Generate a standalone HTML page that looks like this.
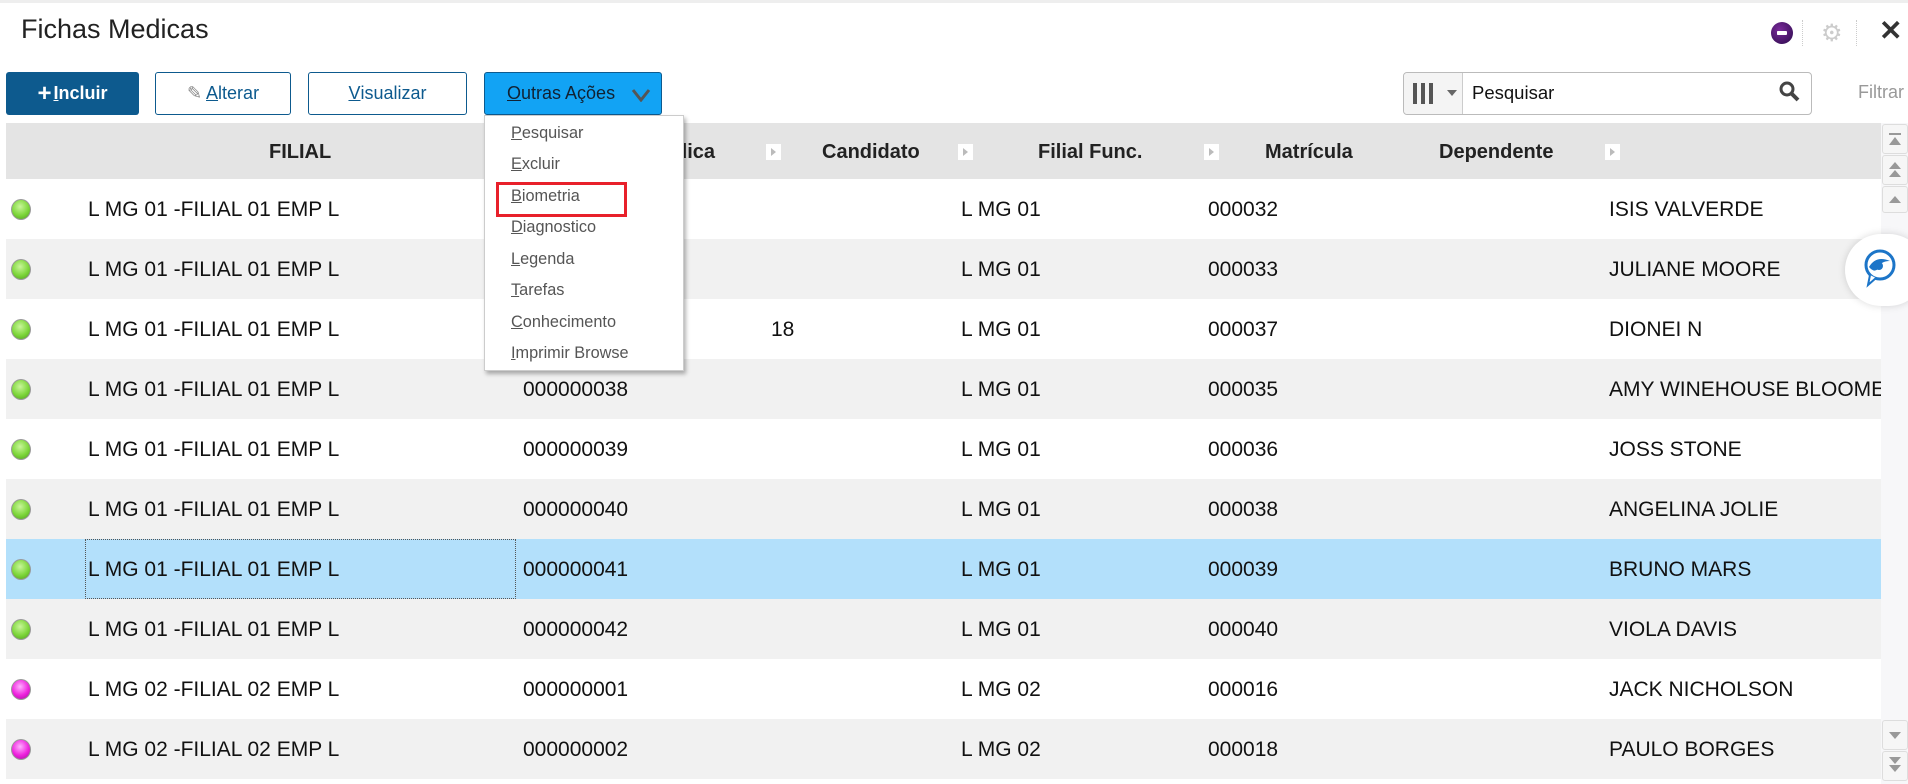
<!DOCTYPE html>
<html><head><meta charset="utf-8"><style>
*{margin:0;padding:0;box-sizing:border-box}
body{width:1908px;height:784px;background:#fff;font-family:"Liberation Sans",Arial,sans-serif;position:relative;overflow:hidden;color:#111}
.a{position:absolute}
.btn{position:absolute;top:72px;height:43px;border-radius:3px;font-size:18px;display:flex;align-items:center;justify-content:center}
.row{position:absolute;left:6px;width:1875px;height:60px;font-size:21px}
.row span{position:absolute;top:19px;white-space:nowrap}
.dot{position:absolute;left:5px;top:20px;width:20px;height:21px;border-radius:50%;border:1px solid #999}
.g{background:radial-gradient(circle at 45% 35%,#c9f59a,#7dd63a 55%,#4e9a1d)}
.m{background:radial-gradient(circle at 45% 35%,#ffb0ff,#ee22dd 55%,#a0109a)}
.hd{position:absolute;top:141px;font-size:20px;font-weight:bold;color:#222}
.ar{position:absolute;top:144px;width:15px;height:16px;background:#fff}
.ar:after{content:"";position:absolute;left:5px;top:4px;border-left:5px solid #bbb;border-top:4px solid transparent;border-bottom:4px solid transparent}
.mi{position:absolute;left:511px;font-size:16.3px;color:#555}
.mi u{text-decoration:underline}
.sb{position:absolute;left:1882px;width:26px;height:30px;background:#f6f6f6;border:1px solid #ddd;border-radius:3px}
</style></head><body>
<div class="a" style="left:0;top:0;width:1908px;height:3px;background:#eee"></div>
<div class="a" style="left:21px;top:14px;font-size:27px;color:#222">Fichas Medicas</div>
<div class="a" style="left:1771px;top:22px;width:22px;height:22px;border-radius:50%;background:radial-gradient(circle at 40% 35%,#7a2a9a,#2a0a4a)"></div>
<div class="a" style="left:1777px;top:31px;width:10px;height:4px;border:2px solid #fff;border-right:none;border-radius:1px"></div>
<div class="a" style="left:1802px;top:20px;height:26px;border-left:1px dotted #ccc"></div>
<div class="a" style="left:1821px;top:19px;font-size:24px;color:#ccc">⚙</div>
<div class="a" style="left:1856px;top:20px;height:26px;border-left:1px dotted #ccc"></div>
<div class="a" style="left:1879px;top:14px;font-size:28px;color:#333;font-weight:bold">✕</div>

<div class="btn" style="left:6px;width:133px;background:#0d5a8e;color:#fff;font-weight:bold"><span style="font-size:24px;margin-right:2px">+</span><u>I</u>ncluir</div>
<div class="btn" style="left:155px;width:136px;border:1px solid #0d5a8e;color:#0d5a8e"><span style="color:#888;margin-right:4px">✎</span><u>A</u>lterar</div>
<div class="btn" style="left:308px;width:159px;border:1px solid #0d5a8e;color:#0d5a8e"><u>V</u>isualizar</div>
<div class="btn" style="left:484px;width:178px;background:#12a3f4;border:1px solid #0d5a8e;color:#123;justify-content:flex-start;padding-left:22px"><u>O</u>utras Ações<svg style="position:absolute;right:10px;top:15px" width="20" height="14"><path d="M2 2 L10 12 L18 2" stroke="#555" stroke-width="3" fill="none"/></svg></div>

<div class="a" style="left:1403px;top:72px;width:409px;height:43px;border:1px solid #bbb;border-radius:4px"></div>
<div class="a" style="left:1404px;top:73px;width:59px;height:41px;background:#f4f4f4;border-right:1px solid #ccc;border-radius:4px 0 0 4px"></div>
<div class="a" style="left:1413px;top:83px;width:4px;height:21px;background:#555;box-shadow:8px 0 #555,16px 0 #555"></div>
<div class="a" style="left:1447px;top:90px;border-top:6px solid #666;border-left:5px solid transparent;border-right:5px solid transparent"></div>
<div class="a" style="left:1472px;top:82px;font-size:18.5px;color:#111">Pesquisar</div>
<svg class="a" style="left:1779px;top:81px" width="22" height="22"><circle cx="8" cy="8" r="6" stroke="#444" stroke-width="3" fill="none"/><path d="M12 12 L19 19" stroke="#444" stroke-width="4"/></svg>
<div class="a" style="left:1858px;top:82px;font-size:18px;color:#999">Filtrar</div>

<div class="a" style="left:6px;top:123px;width:1875px;height:56px;background:#e4e4e4"></div>
<div class="hd" style="left:269px">FILIAL</div>
<div class="hd" style="left:675px">dica</div>
<div class="ar" style="left:766px"></div>
<div class="hd" style="left:822px">Candidato</div>
<div class="ar" style="left:958px"></div>
<div class="hd" style="left:1038px">Filial Func.</div>
<div class="ar" style="left:1204px"></div>
<div class="hd" style="left:1265px">Matrícula</div>
<div class="hd" style="left:1439px">Dependente</div>
<div class="ar" style="left:1605px"></div>

<div class="row" style="top:179px;background:#fff"><div class="dot g"></div><span style="left:82px">L MG 01 -FILIAL 01 EMP L</span><span style="left:955px">L MG 01</span><span style="left:1202px">000032</span><span style="left:1603px">ISIS VALVERDE</span></div>
<div class="row" style="top:239px;background:#f1f1f1"><div class="dot g"></div><span style="left:82px">L MG 01 -FILIAL 01 EMP L</span><span style="left:955px">L MG 01</span><span style="left:1202px">000033</span><span style="left:1603px">JULIANE MOORE</span></div>
<div class="row" style="top:299px;background:#fff"><div class="dot g"></div><span style="left:82px">L MG 01 -FILIAL 01 EMP L</span><span style="left:765px">18</span><span style="left:955px">L MG 01</span><span style="left:1202px">000037</span><span style="left:1603px">DIONEI N</span></div>
<div class="row" style="top:359px;background:#f1f1f1"><div class="dot g"></div><span style="left:82px">L MG 01 -FILIAL 01 EMP L</span><span style="left:517px">000000038</span><span style="left:955px">L MG 01</span><span style="left:1202px">000035</span><span style="left:1603px">AMY WINEHOUSE BLOOMEI</span></div>
<div class="row" style="top:419px;background:#fff"><div class="dot g"></div><span style="left:82px">L MG 01 -FILIAL 01 EMP L</span><span style="left:517px">000000039</span><span style="left:955px">L MG 01</span><span style="left:1202px">000036</span><span style="left:1603px">JOSS STONE</span></div>
<div class="row" style="top:479px;background:#f1f1f1"><div class="dot g"></div><span style="left:82px">L MG 01 -FILIAL 01 EMP L</span><span style="left:517px">000000040</span><span style="left:955px">L MG 01</span><span style="left:1202px">000038</span><span style="left:1603px">ANGELINA JOLIE</span></div>
<div class="row" style="top:539px;background:#b3e0fb"><div class="dot g"></div><div class="a" style="left:79px;top:0;width:431px;height:60px;border:1px dotted #555"></div><span style="left:82px">L MG 01 -FILIAL 01 EMP L</span><span style="left:517px">000000041</span><span style="left:955px">L MG 01</span><span style="left:1202px">000039</span><span style="left:1603px">BRUNO MARS</span></div>
<div class="row" style="top:599px;background:#f1f1f1"><div class="dot g"></div><span style="left:82px">L MG 01 -FILIAL 01 EMP L</span><span style="left:517px">000000042</span><span style="left:955px">L MG 01</span><span style="left:1202px">000040</span><span style="left:1603px">VIOLA DAVIS</span></div>
<div class="row" style="top:659px;background:#fff"><div class="dot m"></div><span style="left:82px">L MG 02 -FILIAL 02 EMP L</span><span style="left:517px">000000001</span><span style="left:955px">L MG 02</span><span style="left:1202px">000016</span><span style="left:1603px">JACK NICHOLSON</span></div>
<div class="row" style="top:719px;background:#f1f1f1"><div class="dot m"></div><span style="left:82px">L MG 02 -FILIAL 02 EMP L</span><span style="left:517px">000000002</span><span style="left:955px">L MG 02</span><span style="left:1202px">000018</span><span style="left:1603px">PAULO BORGES</span></div>

<div class="a" style="left:1881px;top:123px;width:27px;height:661px;background:#f7f7f9"></div>
<div class="sb" style="top:124px"></div><div class="a" style="left:1889px;top:133px;width:12px;border-top:2px solid #999"></div><div class="a" style="left:1889px;top:137px;border-bottom:8px solid #999;border-left:6px solid transparent;border-right:6px solid transparent"></div>
<div class="sb" style="top:155px"></div><div class="a" style="left:1889px;top:162px;border-bottom:7px solid #999;border-left:6px solid transparent;border-right:6px solid transparent"></div><div class="a" style="left:1889px;top:170px;border-bottom:7px solid #999;border-left:6px solid transparent;border-right:6px solid transparent"></div>
<div class="sb" style="top:186px;height:27px"></div><div class="a" style="left:1889px;top:196px;border-bottom:7px solid #999;border-left:6px solid transparent;border-right:6px solid transparent"></div>
<div class="sb" style="top:720px"></div><div class="a" style="left:1889px;top:732px;border-top:7px solid #999;border-left:6px solid transparent;border-right:6px solid transparent"></div>
<div class="sb" style="top:751px"></div><div class="a" style="left:1889px;top:757px;border-top:7px solid #999;border-left:6px solid transparent;border-right:6px solid transparent"></div><div class="a" style="left:1889px;top:765px;border-top:7px solid #999;border-left:6px solid transparent;border-right:6px solid transparent"></div>

<div class="a" style="left:1845px;top:234px;width:80px;height:72px;border-radius:36px;background:#fff;box-shadow:0 0 8px rgba(0,0,0,.15)"></div>
<svg class="a" style="left:1862px;top:249px" width="36" height="40"><circle cx="18" cy="16" r="14" fill="#fff" stroke="#1c75c8" stroke-width="3"/><path d="M8 26 L6 36 L14 29" fill="#fff" stroke="#1c75c8" stroke-width="2"/><path d="M7 18 Q14 6 28 12 Q18 12 16 20 Q12 24 7 18Z" fill="#1c75c8"/><circle cx="17" cy="17" r="4" fill="#1c75c8"/></svg>

<div class="a" style="left:484px;top:115px;width:200px;height:256px;background:#fff;border:1px solid #ccc;box-shadow:2px 3px 4px rgba(0,0,0,.3)"></div>
<div class="mi" style="top:124px"><u>P</u>esquisar</div>
<div class="mi" style="top:155px"><u>E</u>xcluir</div>
<div class="mi" style="top:187px"><u>B</u>iometria</div>
<div class="mi" style="top:218px"><u>D</u>iagnostico</div>
<div class="mi" style="top:250px"><u>L</u>egenda</div>
<div class="mi" style="top:281px"><u>T</u>arefas</div>
<div class="mi" style="top:313px"><u>C</u>onhecimento</div>
<div class="mi" style="top:344px"><u>I</u>mprimir Browse</div>
<div class="a" style="left:496px;top:182px;width:131px;height:35px;border:3px solid #e8202a"></div>
</body></html>
